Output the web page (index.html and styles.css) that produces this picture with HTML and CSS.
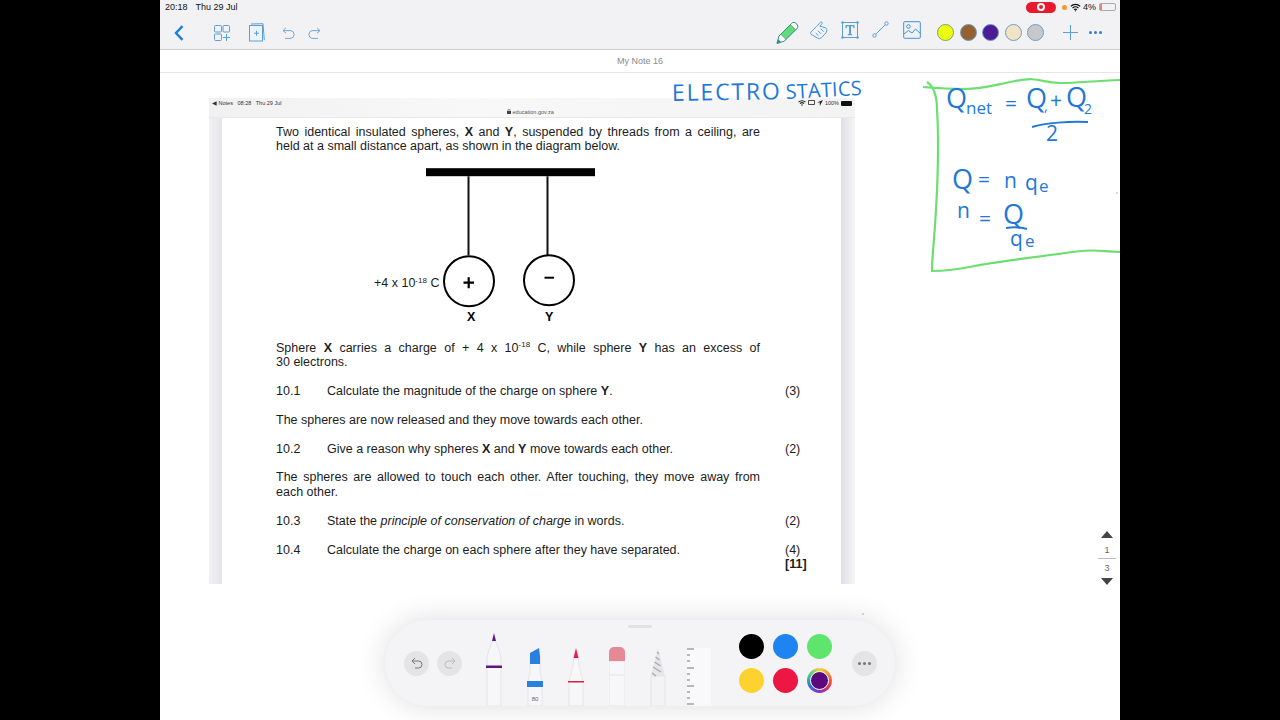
FILE: index.html
```html
<!DOCTYPE html>
<html lang="en">
<head>
    <meta charset="UTF-8">
    <title>My Note 16</title>
    <link rel="stylesheet" href="styles.css">
</head>
<body>
    <div class="screen">
        <div class="topbar">
            <div class="status">
                <span class="clock">20:18</span>
                <span class="date">Thu 29 Jul</span>
                <span class="rec"><span class="rec-dot"></span></span>
                <span class="orange-dot"></span>
                <svg class="wifi" width="11" height="9" viewBox="0 0 14 10"><path d="M1 3.6a8.5 8.5 0 0 1 12 0M3.2 5.8a5.4 5.4 0 0 1 7.6 0M5.3 7.8a2.4 2.4 0 0 1 3.4 0" fill="none" stroke="#111" stroke-width="1.6"/><circle cx="7" cy="9.2" r=".8" fill="#111"/></svg>
                <span class="batt-text">4%</span>
                <span class="battery"><span class="battery-level"></span></span>
            </div>
            <div class="toolbar">
                <svg class="back" width="10" height="16" viewBox="0 0 10 16"><path d="M8.5 1.2 2 8l6.5 6.8" fill="none" stroke="#1c7ed6" stroke-width="2.4"/></svg>
                <div class="pages">
                    <svg width="16" height="16" viewBox="0 0 16 16"><g fill="none" stroke="#5a9fd8"><rect x=".5" y=".5" width="7" height="6.5" rx="1"/><rect x="9" y=".5" width="6.5" height="6.5" rx="1"/><rect x=".5" y="9" width="7" height="6.5" rx="1"/><path d="M9 12.5h7M12.5 9v7"/></g></svg>
                    <svg width="16" height="19" viewBox="0 0 16 19"><g fill="none" stroke="#5a9fd8"><rect x=".5" y="2.5" width="13" height="15.5" fill="#eef3f9"/><path d="M2 1 14 .7l1.3 16.5M5 10.2h5M7.5 7.7v5"/></g></svg>
                </div>
                <div class="history">
                    <svg width="14" height="12" viewBox="0 0 14 12"><path d="M4 .8 1 3.6l3 2.6M1 3.6h8a4 4 0 0 1 0 7.8H3" fill="none" stroke="#6ea9dc"/></svg>
                    <svg width="14" height="12" viewBox="0 0 14 12"><path d="M10 .8l3 2.8-3 2.6M13 3.6H5a4 4 0 0 0 0 7.8h6" fill="none" stroke="#6ea9dc"/></svg>
                </div>
                <div class="tools">
                    <span class="tool">
                        <svg width="23" height="23" viewBox="0 0 23 23"><path d="M1 22.5 3 15 15.5 2.5a3 3 0 0 1 5 .5 3 3 0 0 1 .5 4.5L8.5 20z" fill="#fff" stroke="#2e8b7a"/><path d="M4.8 13.2 14.5 3.8l5 4.7-9.8 9.6z" fill="#62dc78" stroke="#2e8b7a" stroke-width=".6"/><path d="M1 22.5l1-4.3 3 2.9z" fill="#2e8b7a"/></svg>
                    </span>
                    <span class="tool">
                        <svg width="18" height="19" viewBox="0 0 18 19"><path d="M1 11 6.5 5.5 10.5 1.2c1-.9 2.4.4 1.5 1.5L9.8 5.2l5.4 1.5c1.3.4 2 1.6 1.6 2.9l-.8 2.2-4.6 5a3 3 0 0 1-4 .2L1.2 13.4A1.7 1.7 0 0 1 1 11zM8 9.8l3 3M10.5 7.6l3.2 3M5.7 12l2.8 2.8" fill="none" stroke="#5a9fd8"/></svg>
                    </span>
                    <span class="tool">
                        <svg width="18" height="18" viewBox="0 0 18 18"><rect x="1.5" y="1.5" width="15" height="15" fill="none" stroke="#5a9fd8"/><g fill="#5a9fd8"><circle cx="1.5" cy="1.5" r="1.3"/><circle cx="16.5" cy="1.5" r="1.3"/><circle cx="1.5" cy="16.5" r="1.3"/><circle cx="16.5" cy="16.5" r="1.3"/><path d="M4.5 4h9v3.2h-1L12 5.3H10v7.6l1.2.4v.9H6.8v-.9l1.2-.4V5.3H6l-.5 1.9h-1z"/></g></svg>
                    </span>
                    <span class="tool">
                        <svg width="17" height="17" viewBox="0 0 17 17"><path d="M3 14 14 3" stroke="#5a9fd8"/><circle cx="2.5" cy="14.5" r="1.7" fill="#f2f2f5" stroke="#5a9fd8"/><circle cx="14.5" cy="2.5" r="1.7" fill="#f2f2f5" stroke="#5a9fd8"/></svg>
                    </span>
                    <span class="tool">
                        <svg width="18" height="18" viewBox="0 0 18 18"><rect x=".7" y=".7" width="16.6" height="16.6" rx="1" fill="none" stroke="#3f92d6"/><circle cx="5.5" cy="5.5" r="1.8" fill="none" stroke="#3f92d6"/><path d="M1 13l4.5-3.5 3.5 2.5 3.5-4 5 4.5" fill="none" stroke="#3f92d6"/></svg>
                    </span>
                </div>
                <div class="swatches">
                    <span class="swatch swatch-yellow"></span>
                    <span class="swatch swatch-brown"></span>
                    <span class="swatch swatch-purple"></span>
                    <span class="swatch swatch-cream"></span>
                    <span class="swatch swatch-grey"></span>
                </div>
                <svg class="plus" width="15" height="15" viewBox="0 0 15 15"><path d="M7.5 0v15M0 7.5h15" stroke="#5a9fd8"/></svg>
                <span class="more-dots"><i></i><i></i><i></i></span>
            </div>
        </div>

        <div class="titlebar">My Note 16</div>

        <div class="canvas">
            <div class="doc">
                <div class="doc-head">
                    <span class="doc-status">◀ Notes &nbsp; 08:28 &nbsp; Thu 29 Jul</span>
                    <span class="doc-url">
                        <svg width="4" height="5" viewBox="0 0 4 5"><rect y="2" width="4" height="3" fill="#444"/><path d="M1 2V1a1 1 0 0 1 2 0v1" fill="none" stroke="#444" stroke-width=".6"/></svg>
                        education.gov.za
                    </span>
                    <span class="doc-right">
                        <svg width="8" height="6" viewBox="0 0 14 10"><path d="M1 3.6a8.5 8.5 0 0 1 12 0M3.5 6a5 5 0 0 1 7 0" fill="none" stroke="#222" stroke-width="2"/><circle cx="7" cy="8.6" r="1.3" fill="#222"/></svg>
                        <svg width="7" height="6" viewBox="0 0 7 6"><path d="M.5.5h6v4h-6z" fill="none" stroke="#222" stroke-width=".8"/></svg>
                        <svg width="6" height="6" viewBox="0 0 6 6"><path d="M6 0 0 2.6h2.8V6z" fill="#222"/></svg>
                        100%
                        <span class="doc-batt"></span>
                    </span>
                </div>
                <div class="doc-body">
                    <div class="page">
                        <p class="para">Two identical insulated spheres, <b>X</b> and <b>Y</b>, suspended by threads from a ceiling, are held at a small distance apart, as shown in the diagram below.</p>
                        <svg class="diagram" width="484" height="173" viewBox="276 167.8 484 173">
                            <rect x="426" y="168" width="169" height="8" fill="#000"/>
                            <path d="M468.5 176v79M547.5 176v79" stroke="#111" stroke-width="2"/>
                            <circle cx="469" cy="281" r="25" fill="#fff" stroke="#000" stroke-width="2"/>
                            <circle cx="549" cy="280" r="25" fill="#fff" stroke="#000" stroke-width="2"/>
                            <path d="M463.5 282.5h10.5M468.7 277v11" stroke="#000" stroke-width="2.2"/>
                            <path d="M544.5 277.5h9.5" stroke="#000" stroke-width="2"/>
                            <text class="dia-label" x="374" y="287">+4 x 10<tspan class="dia-sup" dy="-4">-18</tspan><tspan dy="4"> C</tspan></text>
                            <text class="dia-name" x="467" y="321">X</text>
                            <text class="dia-name" x="545" y="321">Y</text>
                        </svg>
                        <p class="para">Sphere <b>X</b> carries a charge of + 4 x 10<sup>-18</sup> C, while sphere <b>Y</b> has an excess of 30&nbsp;electrons.</p>
                        <div class="question"><span class="q-num">10.1</span><span class="q-text">Calculate the magnitude of the charge on sphere <b>Y</b>.</span><span class="q-mark">(3)</span></div>
                        <p class="para">The spheres are now released and they move towards each other.</p>
                        <div class="question"><span class="q-num">10.2</span><span class="q-text">Give a reason why spheres <b>X</b> and <b>Y</b> move towards each other.</span><span class="q-mark">(2)</span></div>
                        <p class="para">The spheres are allowed to touch each other. After touching, they move away from each other.</p>
                        <div class="question"><span class="q-num">10.3</span><span class="q-text">State the <i>principle of conservation of charge</i> in words.</span><span class="q-mark">(2)</span></div>
                        <div class="question"><span class="q-num">10.4</span><span class="q-text">Calculate the charge on each sphere after they have separated.</span><span class="q-mark">(4)<br><b>[11]</b></span></div>
                    </div>
                </div>
            </div>

            <svg class="ink" width="960" height="647" viewBox="160 73 960 647">
                <text class="hand hand-title" transform="rotate(-1 672 101)" x="672" y="101" textLength="108" lengthAdjust="spacing">ELECTRO</text>
                <text class="hand hand-title-b" transform="rotate(-3 786 99)" x="786" y="99" textLength="76" lengthAdjust="spacing">STATICS</text>
                <path class="ink-box" d="M923 87C935 88 948 89 965 89S990 86 1015 81 1040 83 1060 83 1090 81 1120 80M927 82C933 86 937 94 937 110 939 140 938 175 936 210S932 255 932 271C945 271 955 270 975 266S1030 258 1065 253 1100 252 1120 252"/>
                <text class="hand hand-big" x="946" y="108">Q</text>
                <text class="hand hand-small" x="966" y="114">net</text>
                <text class="hand hand-mid" x="1005" y="111">=</text>
                <text class="hand hand-big" x="1026" y="108">Q</text>
                <text class="hand hand-sub" x="1044" y="111">,</text>
                <text class="hand hand-mid" x="1050" y="108">+</text>
                <text class="hand hand-big" x="1066" y="107">Q</text>
                <text class="hand hand-sub" x="1084" y="114">2</text>
                <path class="ink-line" d="M1032 127C1045 123 1070 121 1088 122"/>
                <text class="hand hand-mid" x="1046" y="141">2</text>
                <text class="hand hand-big" x="952" y="189">Q</text>
                <text class="hand hand-mid" x="978" y="187">=</text>
                <text class="hand hand-mid" x="1004" y="188">n</text>
                <text class="hand hand-mid" x="1025" y="190">q</text>
                <text class="hand hand-small" x="1039" y="192">e</text>
                <text class="hand hand-mid" x="957" y="218">n</text>
                <text class="hand hand-mid" x="979" y="226">=</text>
                <text class="hand hand-big" x="1003" y="224">Q</text>
                <path class="ink-line" d="M1006 228C1012 227 1020 227 1027 229"/>
                <text class="hand hand-mid" x="1010" y="246">q</text>
                <text class="hand hand-small" x="1025" y="247">e</text>
                <circle cx="863" cy="614" r=".6" fill="#555"/>
                <circle cx="1117" cy="193" r=".8" fill="#aaa"/>
            </svg>

            <div class="pager">
                <span class="tri-up"></span>
                <span class="pager-num">1</span>
                <span class="pager-line"></span>
                <span class="pager-num">3</span>
                <span class="tri-down"></span>
            </div>

            <div class="palette">
                <span class="handle"></span>
                <button class="round-btn">
                    <svg width="12" height="12" viewBox="0 0 12 12"><path d="M4 1 1 4l3 3M1 4h6.5a3.5 3.5 0 0 1 0 7H4" fill="none" stroke="#777"/></svg>
                </button>
                <button class="round-btn">
                    <svg width="12" height="12" viewBox="0 0 12 12"><path d="M8 1l3 3-3 3M11 4H4.5a3.5 3.5 0 0 0 0 7H8" fill="none" stroke="#bbb"/></svg>
                </button>
                <div class="pens">
                    <svg width="16" height="73" viewBox="0 0 16 73"><path d="M1 73V28C1 20 5 12 6.5 8h3C11 12 15 20 15 28v45z" fill="#f7f7f9" stroke="#e4e4e8"/><path d="M6 8 8 0l2 8z" fill="#5c1a80"/><rect x="0" y="32.5" width="16" height="2.5" fill="#5c1a80"/></svg>
                    <svg width="16" height="58" viewBox="0 0 16 58"><path d="M1 58V32l2-7V8h10v17l2 7v26z" fill="#f7f7f9" stroke="#e4e4e8"/><path d="M3 8V5l9-5 1 8z" fill="#2a7fe0"/><path d="M3 8h10v8H3z" fill="#2a7fe0"/><rect y="33" width="16" height="6" fill="#2a7fe0"/><text class="pen-size" x="8" y="53">80</text></svg>
                    <svg width="16" height="58" viewBox="0 0 16 58"><path d="M1 58V34C2 28 5 20 6 10h4C11 20 14 28 15 34v24z" fill="#f7f7f9" stroke="#e4e4e8"/><path d="M5.5 10 8 0l2.5 10z" fill="#e0204a"/><rect y="33" width="16" height="1.5" fill="#d4213f"/></svg>
                    <svg width="16" height="59" viewBox="0 0 16 59"><path d="M0 59V14h16v45z" fill="#f7f7f9" stroke="#e4e4e8"/><path d="M0 14V5a5 5 0 0 1 5-5h6a5 5 0 0 1 5 5v9z" fill="#e58a94"/><path d="M0 28h16" stroke="#e4e4e8"/></svg>
                    <svg width="16" height="58" viewBox="0 0 16 58"><path d="M1 58V28h14v30z" fill="#f3f3f5" stroke="#e4e4e8"/><path d="M8 0 15 28H1z" fill="#e6e6e9"/><path d="M7 4l2 2M5.5 9l4 3M4.5 14l6 4M3 19l8 5M2 25l4 3" stroke="#a9a9ae" stroke-width="1.2"/></svg>
                    <svg class="ruler" width="24" height="58" viewBox="0 0 24 58"><rect width="24" height="58" fill="#f9f9fb"/><path d="M0 1h7M0 7h3M0 13h3M0 20h7M0 26h3M0 32h3M0 38h7M0 44h3M0 50h3M0 56h7" stroke="#777"/></svg>
                </div>
                <div class="colors">
                    <span class="dot dot-black"></span>
                    <span class="dot dot-blue"></span>
                    <span class="dot dot-green"></span>
                    <span class="dot dot-yellow"></span>
                    <span class="dot dot-red"></span>
                    <span class="dot dot-picker"><span class="dot-inner"></span></span>
                </div>
                <button class="round-btn">
                    <span class="btn-dots"><i></i><i></i><i></i></span>
                </button>
            </div>
        </div>
    </div>
</body>
</html>
```

FILE: styles.css
```css
* {
    box-sizing: border-box;
    margin: 0;
    padding: 0;
}

body {
    background: #000;
    font-family: "Liberation Sans", Arial, sans-serif;
}

.screen {
    width: 960px;
    height: 720px;
    margin: 0 auto;
    background: #fff;
    display: flex;
    flex-direction: column;
    overflow: hidden;
}

/* top bars */
.topbar {
    height: 50px;
    background: #f2f2f5;
    border-bottom: 1px solid #cfcfd2;
}

.status {
    height: 14px;
    display: flex;
    align-items: center;
    padding: 0 4px 0 5px;
    font-size: 9px;
    color: #111;
}

.date {
    margin-left: 8px;
    margin-right: auto;
}

.rec {
    width: 30px;
    height: 11px;
    background: #e8192c;
    border-radius: 6px;
    display: flex;
    align-items: center;
    justify-content: center;
}

.rec-dot {
    width: 8px;
    height: 8px;
    border: 2px solid #fff;
    border-radius: 50%;
}

.orange-dot {
    width: 5px;
    height: 5px;
    background: #f39a26;
    border-radius: 50%;
    margin-left: 5.5px;
}

.wifi {
    margin-left: 3px;
}

.batt-text {
    margin-left: 2px;
}

.battery {
    width: 17px;
    height: 8px;
    margin-left: 3px;
    border: 1px solid #aaa;
    border-radius: 2px;
}

.battery-level {
    display: block;
    width: 2px;
    height: 100%;
    background: #d88;
}

.toolbar {
    height: 35px;
    display: flex;
    align-items: center;
    padding: 2px 18px 0 14px;
}

.pages {
    display: flex;
    align-items: center;
    gap: 19px;
    margin-left: 30px;
}

.history {
    display: flex;
    gap: 11px;
    margin-left: 17px;
}

.tools {
    display: flex;
    margin-left: auto;
}

.tool {
    width: 31px;
    display: flex;
    justify-content: center;
}

.swatches {
    display: flex;
    gap: 5.5px;
    margin-left: 10px;
}

.swatch {
    width: 17px;
    height: 17px;
    border-radius: 50%;
    border: 1px solid #6a9fc8;
}

.swatch-yellow { background: #eaff12; border-color: #7da65a; }
.swatch-brown { background: #94622f; }
.swatch-purple { background: #4d1c95; }
.swatch-cream { background: #f1e3c4; }
.swatch-grey { background: #c6c8cc; }

.plus {
    margin-left: 19px;
}

.more-dots,
.btn-dots {
    display: flex;
    gap: 2px;
}

.more-dots {
    margin-left: 11px;
}

.more-dots i {
    width: 3px;
    height: 3px;
    background: #2f7fd0;
    border-radius: 50%;
}

.titlebar {
    height: 23px;
    line-height: 22px;
    text-align: center;
    font-size: 9px;
    color: #8a8a8a;
    border-bottom: 1px solid #e6e6e8;
}

/* note canvas */
.canvas {
    flex: 1;
    position: relative;
}

.doc {
    position: absolute;
    left: 49px;
    top: 25px;
    width: 646px;
    height: 486px;
    display: flex;
    flex-direction: column;
}

.doc-head {
    position: relative;
    flex: none;
    height: 20px;
    background: linear-gradient(90deg, #f1f1f1, #f8f8f8 40%, #f3f3f3);
    border-bottom: 1px solid #e8e8e8;
    font-size: 5.5px;
    color: #333;
}

.doc-status {
    position: absolute;
    left: 3px;
    top: 2px;
}

.doc-url {
    position: absolute;
    left: 298px;
    top: 11px;
    color: #555;
}

.doc-right {
    position: absolute;
    right: 3px;
    top: 2px;
    display: flex;
    align-items: center;
    gap: 2px;
}

.doc-batt {
    width: 11px;
    height: 5px;
    background: #111;
    border-radius: 1px;
}

.doc-body {
    flex: 1;
    min-height: 0;
    background: linear-gradient(90deg, #f0f0f4 0, #e4e4ea 13px, #fff 13px, #fff 632px, #dedee6 632px, #f5f5f8 646px);
    padding: 0 14px 0 13px;
}

.page {
    height: 100%;
    background: #fff;
    padding: 6.5px 0 0 54px;
    font-size: 12.5px;
    line-height: 14.5px;
    color: #1c1c1c;
}

.para {
    width: 484px;
    text-align: justify;
    margin-bottom: 14.3px;
}

.para sup {
    font-size: 8px;
    line-height: 0;
}

.diagram {
    display: block;
}

.dia-label {
    font-size: 12.5px;
    fill: #1c1c1c;
}

.dia-sup {
    font-size: 8px;
}

.dia-name {
    font-size: 12.5px;
    font-weight: bold;
}

.question {
    display: flex;
    margin-bottom: 14.3px;
}

.q-num {
    width: 51px;
}

.q-text {
    width: 458px;
}

/* handwriting and pencil tray */
.ink {
    position: absolute;
    left: 0;
    top: 0;
    pointer-events: none;
}

.ink-box {
    fill: none;
    stroke: #6cdf70;
    stroke-width: 2.2;
}

.ink-line {
    fill: none;
    stroke: #1f78d8;
    stroke-width: 2;
}

.hand {
    font-family: "Open Sans", sans-serif;
    fill: #1f78d8;
}

.hand-title {
    font-size: 23px;
}

.hand-title-b {
    font-size: 20px;
}

.hand-big {
    font-size: 27px;
}

.hand-mid {
    font-size: 21px;
}

.hand-small {
    font-size: 17px;
}

.hand-sub {
    font-size: 14px;
}

.pager {
    position: absolute;
    left: 936px;
    top: 458px;
    width: 22px;
    display: flex;
    flex-direction: column;
    align-items: center;
    font-size: 9px;
    color: #666;
}

.tri-up,
.tri-down {
    width: 0;
    height: 0;
    border-left: 6px solid transparent;
    border-right: 6px solid transparent;
}

.tri-up {
    border-bottom: 7px solid #444;
    margin-bottom: 6px;
}

.tri-down {
    border-top: 7px solid #444;
    margin-top: 4px;
}

.pager-num {
    line-height: 12px;
}

.pager-line {
    width: 18px;
    height: 1px;
    margin: 2px 0 3px;
    background: #bbb;
}

.palette {
    position: absolute;
    left: 225px;
    top: 547px;
    width: 510px;
    height: 86px;
    padding: 0 19px;
    border-radius: 43px;
    background: #f4f4f6;
    box-shadow: 0 0 30px rgba(0, 0, 0, 0.14);
    display: flex;
    align-items: center;
    overflow: hidden;
}

.handle {
    position: absolute;
    left: 243px;
    top: 5px;
    width: 24px;
    height: 3px;
    border-radius: 2px;
    background: #e2e2e4;
}

.round-btn {
    width: 25px;
    height: 25px;
    border: none;
    border-radius: 50%;
    background: #e4e4e6;
    display: flex;
    align-items: center;
    justify-content: center;
    flex: none;
}

.round-btn + .round-btn {
    margin-left: 8px;
}

.pens {
    align-self: flex-end;
    display: flex;
    align-items: flex-end;
    gap: 25px;
    margin-left: 24px;
}

.ruler {
    margin-left: -4px;
}

.pen-size {
    font-size: 6px;
    fill: #666;
    text-anchor: middle;
}

.colors {
    display: grid;
    grid-template-columns: repeat(3, 25px);
    gap: 9px;
    margin: 0 20px 0 28px;
}

.dot {
    width: 25px;
    height: 25px;
    border-radius: 50%;
}

.dot-black { background: #000; }
.dot-blue { background: #1d84f2; }
.dot-green { background: #5ee56d; }
.dot-yellow { background: #fcd22e; }
.dot-red { background: #ec1742; }

.dot-picker {
    background: conic-gradient(#f6d33c, #f08a3c, #e8364f, #8c2fc0, #2f6fe0, #3fcf8a, #f6d33c);
    display: flex;
    align-items: center;
    justify-content: center;
}

.dot-inner {
    width: 19px;
    height: 19px;
    background: #5a0a7c;
    border: 1.5px solid #fff;
    border-radius: 50%;
}

.btn-dots i {
    width: 3px;
    height: 3px;
    background: #777;
    border-radius: 50%;
}
```
